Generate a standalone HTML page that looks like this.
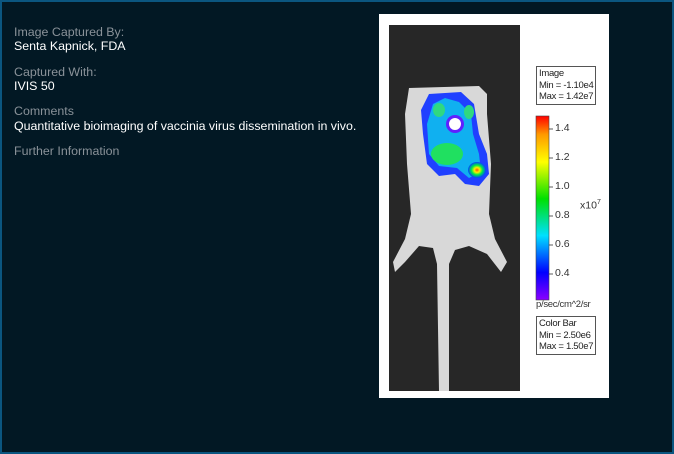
<!DOCTYPE html>
<html><head><style>
html,body{margin:0;padding:0}
body{width:674px;height:454px;background:#0b5680;position:relative;overflow:hidden;font-family:"Liberation Sans",Arial,sans-serif}
#main{position:absolute;left:2px;top:2px;width:670px;height:450px;background:#021824}
.t{position:absolute;left:14px;font-size:12.4px;white-space:nowrap}
.l{color:#8a9299}.v{color:#fff}
#img{position:absolute;left:379px;top:14px;width:230px;height:384px;background:#fff}
.box{position:absolute;border:1px solid #555;font-family:"Liberation Sans",Arial,sans-serif;font-size:9.5px;line-height:11.5px;color:#222;padding:1px 2px;background:#fff;white-space:nowrap;letter-spacing:-0.3px}
.tk{position:absolute;font-family:"Liberation Sans",Arial,sans-serif;font-size:10.5px;color:#333;white-space:nowrap}
</style></head><body>
<div id="main"></div>
<div class="t l" style="top:25px">Image Captured By:</div>
<div class="t v" style="top:39px">Senta Kapnick, FDA</div>
<div class="t l" style="top:65px">Captured With:</div>
<div class="t v" style="top:79px">IVIS 50</div>
<div class="t l" style="top:104px">Comments</div>
<div class="t v" style="top:119px">Quantitative bioimaging of vaccinia virus dissemination in vivo.</div>
<div class="t l" style="top:144px">Further Information</div>
<div id="img">
<svg width="230" height="384" style="position:absolute;left:0;top:0">
<defs>
<linearGradient id="cb" x1="0" y1="1" x2="0" y2="0">
<stop offset="0" stop-color="#8a00ff"/><stop offset="0.15" stop-color="#0000ff"/><stop offset="0.35" stop-color="#00e0ff"/><stop offset="0.55" stop-color="#00e000"/><stop offset="0.75" stop-color="#ffff00"/><stop offset="0.9" stop-color="#ff9900"/><stop offset="1" stop-color="#ff0000"/></linearGradient>
<radialGradient id="hot" cx="0.5" cy="0.5" r="0.5"><stop offset="0" stop-color="#ff5500"/><stop offset="0.3" stop-color="#ffee00"/><stop offset="0.6" stop-color="#00ee44"/><stop offset="1" stop-color="#0044ff"/></radialGradient>
</defs>
<rect x="10" y="11" width="131" height="366" fill="#272727"/>
<path d="M30 74 L100 72 L108 80 L108 100 L112 150 L110 200 L116 225 L128 248 L122 258 L108 240 L90 232 L76 236 L70 250 L70 377 L60 377 L58 250 L54 234 L40 232 L26 248 L16 258 L14 248 L26 225 L32 200 L28 150 L26 100 Z" fill="#d8d8d8"/>
<path d="M50 80 L82 78 L95 90 L100 120 L108 140 L110 160 L100 172 L86 170 L76 160 L60 162 L48 150 L44 120 L42 96 Z" fill="#2040ff"/>
<path d="M54 90 L66 84 L80 88 L92 100 L94 120 L100 140 L102 158 L90 164 L78 154 L60 152 L50 140 L48 110 Z" fill="#10b0f0"/>
<ellipse cx="68" cy="140" rx="16" ry="11" fill="#20e060"/>
<ellipse cx="98" cy="156" rx="9" ry="8" fill="url(#hot)"/>
<ellipse cx="60" cy="96" rx="6" ry="7" fill="#30d880"/>
<ellipse cx="90" cy="98" rx="5" ry="7" fill="#30d880"/>
<ellipse cx="76" cy="110" rx="9" ry="9" fill="#6020ff"/>
<ellipse cx="76" cy="110" rx="6" ry="6" fill="#fff"/>
<rect x="157" y="102" width="13" height="184" fill="url(#cb)" stroke="#444" stroke-width="0.6"/>
<g stroke="#333" stroke-width="0.8">
<line x1="170" y1="115" x2="174" y2="115"/><line x1="170" y1="144" x2="174" y2="144"/><line x1="170" y1="173" x2="174" y2="173"/><line x1="170" y1="202" x2="174" y2="202"/><line x1="170" y1="231" x2="174" y2="231"/><line x1="170" y1="260" x2="174" y2="260"/>
</g>
</svg>
<div class="box" style="left:157px;top:52px">Image<br>Min = -1.10e4<br>Max = 1.42e7</div>
<div class="tk" style="left:176px;top:108px">1.4</div>
<div class="tk" style="left:176px;top:137px">1.2</div>
<div class="tk" style="left:176px;top:166px">1.0</div>
<div class="tk" style="left:176px;top:195px">0.8</div>
<div class="tk" style="left:176px;top:224px">0.6</div>
<div class="tk" style="left:176px;top:253px">0.4</div>
<div class="tk" style="left:201px;top:185px">x10<sup style="font-size:7px">7</sup></div>
<div class="tk" style="left:157px;top:285px;font-size:9.5px;letter-spacing:-0.3px">p/sec/cm^2/sr</div>
<div class="box" style="left:157px;top:302px">Color Bar<br>Min = 2.50e6<br>Max = 1.50e7</div>
</div>
</body></html>
